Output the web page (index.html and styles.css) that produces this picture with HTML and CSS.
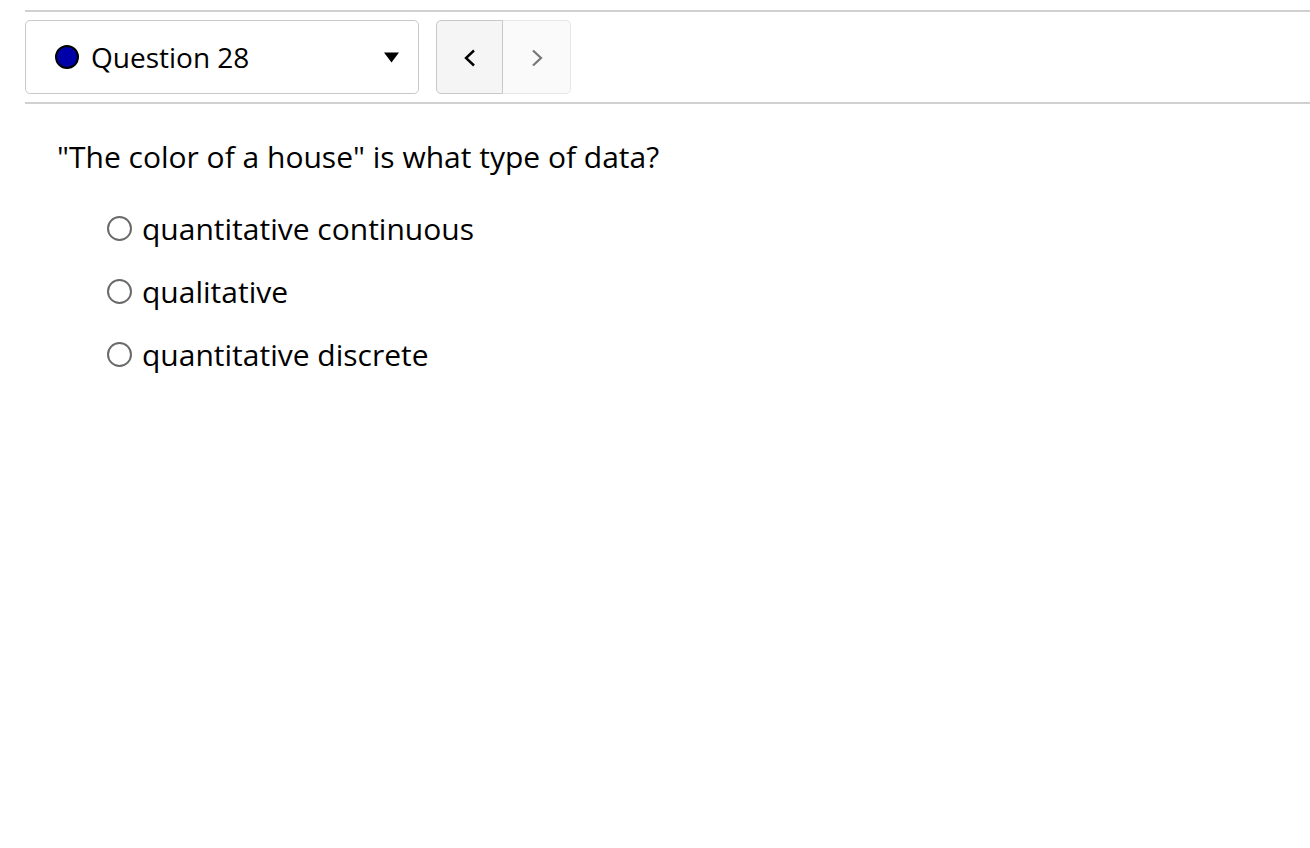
FILE: index.html
```html
<!DOCTYPE html>
<html>
<head>
<meta charset="utf-8">
<link rel="stylesheet" href="styles.css">
</head>
<body>
<div class="page">
  <div class="toolbar">
    <div class="select">
      <span class="dot"></span>
      <span class="select-label">Question 28</span>
      <svg class="caret" width="15" height="11" viewBox="0 0 15 11"><path d="M0 0.5 L15 0.5 L7.5 10.5 Z" fill="#000"/></svg>
    </div>
    <div class="nav">
      <button class="nav-btn prev">
        <svg width="14" height="18" viewBox="0 0 14 18"><path d="M11 1.5 L3 9 L11 16.5" fill="none" stroke="#000" stroke-width="2.4"/></svg>
      </button>
      <button class="nav-btn next">
        <svg width="14" height="18" viewBox="0 0 14 18"><path d="M3 1.5 L11 9 L3 16.5" fill="none" stroke="#777" stroke-width="2.2"/></svg>
      </button>
    </div>
  </div>
  <div class="question">
    <p class="prompt">"The color of a house" is what type of data?</p>
    <ul class="options">
      <li class="option"><span class="radio"></span><span>quantitative continuous</span></li>
      <li class="option"><span class="radio"></span><span>qualitative</span></li>
      <li class="option"><span class="radio"></span><span>quantitative discrete</span></li>
    </ul>
  </div>
</div>
</body>
</html>
```
FILE: styles.css
```css
html, body {
  margin: 0;
  padding: 0;
  background: #fff;
}
body {
  font-family: "Open Sans", "Noto Sans", sans-serif;
  color: #000;
}
.page {
  padding: 10px 0 0 25px;
}
.toolbar {
  display: flex;
  align-items: center;
  gap: 17px;
  border-top: 2px solid #d0d0d0;
  border-bottom: 2px solid #d0d0d0;
  padding: 8px 0 8px 0;
}
.select {
  box-sizing: border-box;
  width: 394px;
  height: 74px;
  border: 1.5px solid #c8c8c8;
  border-radius: 5px;
  display: flex;
  align-items: center;
  padding: 0 19px 0 29px;
}
.dot {
  box-sizing: border-box;
  width: 24px;
  height: 24px;
  border-radius: 50%;
  background: #0000a8;
  border: 2px solid #000;
  flex: none;
}
.select-label {
  font-size: 28px;
  margin-left: 12px;
  flex: 1;
}
.caret {
  flex: none;
}
.nav {
  display: flex;
  height: 74px;
}
.nav-btn {
  box-sizing: border-box;
  width: 67px;
  height: 74px;
  display: flex;
  align-items: center;
  justify-content: center;
  padding: 0;
  margin: 0;
  font: inherit;
}
.prev {
  background: #f5f5f5;
  border: 1.5px solid #c8c8c8;
  border-radius: 5px 0 0 5px;
  padding-top: 2px;
}
.next {
  width: 68px;
  background: #fafafa;
  border: 1.5px solid #e6e6e6;
  border-left: none;
  border-radius: 0 5px 5px 0;
  padding-top: 2px;
}
.question {
  padding: 0 0 0 32px;
}
.prompt {
  font-size: 30px;
  margin: 33px 0 0 0;
  line-height: 40px;
}
.options {
  list-style: none;
  margin: 31px 0 0 50px;
  padding: 0;
}
.option {
  display: flex;
  align-items: center;
  font-size: 30px;
  height: 40px;
  margin-bottom: 23px;
}
.radio {
  box-sizing: border-box;
  width: 25px;
  height: 25px;
  border: 2px solid #6a6a6a;
  border-radius: 50%;
  margin-right: 10px;
  flex: none;
}
```
